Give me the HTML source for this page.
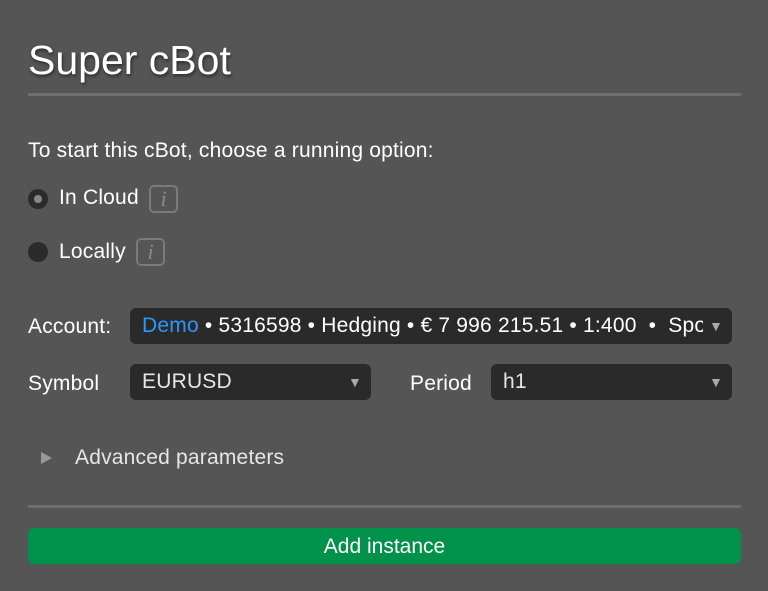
<!DOCTYPE html>
<html><head><meta charset="utf-8"><style>
*{margin:0;padding:0;box-sizing:border-box}
html,body{width:768px;height:591px;background:#555;overflow:hidden;font-family:"Liberation Sans",Arial,sans-serif;color:#fff}
.a{position:absolute}
.title{left:28px;top:37px;font-size:41px;color:#fff;text-shadow:1px 2px 3px rgba(0,0,0,.5);line-height:46px}
.hr{left:28px;width:713px;height:3px;background:#6e6e6e}
.t{font-size:21px;line-height:24px;white-space:nowrap;letter-spacing:0.2px}
.radio{width:20px;height:20px;border-radius:50%;background:#2b2b2b}
.radio.on::after{content:"";position:absolute;left:6px;top:6px;width:8px;height:8px;border-radius:50%;background:#888}
.info{width:29px;height:28px;border:2px solid #7a7a7a;border-radius:5px;color:#8a8a8a;font-family:"Liberation Serif",serif;font-style:italic;font-size:22px;text-align:center;line-height:24px}
.sel{background:#2a2a2a;border-radius:6px;height:36px;font-size:21px;line-height:36px;padding-left:12px;overflow:hidden;white-space:nowrap;letter-spacing:0.2px}
.arr{position:absolute;right:9px;top:0;color:#aaa;font-size:14px}
</style></head><body>
<div class="a title">Super cBot</div>
<div class="a hr" style="top:93px"></div>
<div class="a t" style="left:28px;top:139px">To start this cBot, choose a running option:</div>
<div class="a radio on" style="left:28px;top:189px"></div>
<div class="a t" style="left:59px;top:186px">In Cloud</div>
<div class="a info" style="left:149px;top:185px">i</div>
<div class="a radio" style="left:28px;top:242px"></div>
<div class="a t" style="left:59px;top:240px">Locally</div>
<div class="a info" style="left:136px;top:238px">i</div>
<div class="a t" style="left:28px;top:315px">Account:</div>
<div class="a sel" style="left:130px;top:308px;width:602px"><span style="display:inline-block;width:561px;overflow:hidden;vertical-align:top"><span style="color:#2f95ff">Demo</span> • 5316598 • Hedging • € 7 996 215.51 • 1:400 &nbsp;•&nbsp; Spot</span><span class="arr">▼</span></div>
<div class="a t" style="left:28px;top:372px">Symbol</div>
<div class="a sel" style="left:130px;top:364px;width:241px;color:#e6e6e6">EURUSD<span class="arr">▼</span></div>
<div class="a t" style="left:410px;top:372px">Period</div>
<div class="a sel" style="left:491px;top:364px;width:241px;color:#e6e6e6">h1<span class="arr">▼</span></div>
<div class="a" style="left:41px;top:452px;width:0;height:0;border-left:11px solid #999;border-top:6px solid transparent;border-bottom:6px solid transparent"></div>
<div class="a t" style="left:75px;top:446px;color:#e6e6e6">Advanced parameters</div>
<div class="a hr" style="top:505px"></div>
<div class="a" style="left:28px;top:528px;width:713px;height:36px;background:#00924a;border-radius:6px;text-align:center;line-height:37px;font-size:21px">Add instance</div>
</body></html>
